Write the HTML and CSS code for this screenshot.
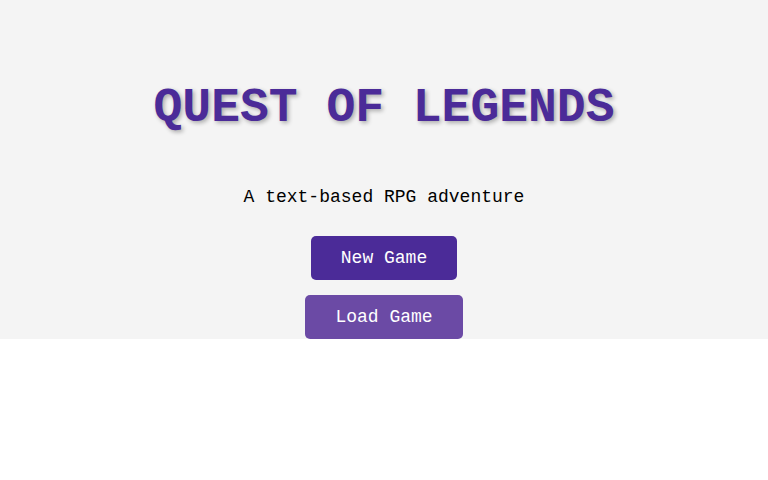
FILE: index.html
```html
<!DOCTYPE html>
<html lang="en">
<head>
  <meta charset="UTF-8">
  <title>Quest of Legends</title>
  <meta name="viewport" content="width=device-width, initial-scale=1.0">
  <link rel="stylesheet" href="styles.css">
</head>
<body>
  <div class="title-screen">
    <h1>QUEST OF LEGENDS</h1>
    <p class="tagline">A text-based RPG adventure</p>
    <div class="menu">
      <button class="btn btn-primary" id="new-game">New Game</button>
      <button class="btn btn-secondary" id="load-game">Load Game</button>
    </div>
  </div>
</body>
</html>
```

FILE: styles.css
```css
html, body {
  margin: 0;
  padding: 0;
  font-family: "Liberation Mono", "Courier New", monospace;
  background-color: #fff;
}
.title-screen {
  background-color: #f4f4f4;
  text-align: center;
  padding: 50px 20px 0;
}
h1 {
  margin: 31px 0 52px;
  font-size: 48px;
  font-weight: bold;
  color: #4b2b98;
  text-shadow: 2px 2px 4px rgba(0,0,0,0.3);
}
.tagline {
  margin: 0 0 29px;
  font-size: 18px;
  color: #000;
}
.menu {
  display: flex;
  flex-direction: column;
  align-items: center;
  gap: 15px;
}
.btn {
  font-family: inherit;
  font-size: 18px;
  padding: 12px 30px;
  border: none;
  border-radius: 5px;
  color: #fff;
  cursor: pointer;
}
.btn-primary {
  background-color: #4b2b98;
}
.btn-secondary {
  background-color: #6b4aa5;
}
```
